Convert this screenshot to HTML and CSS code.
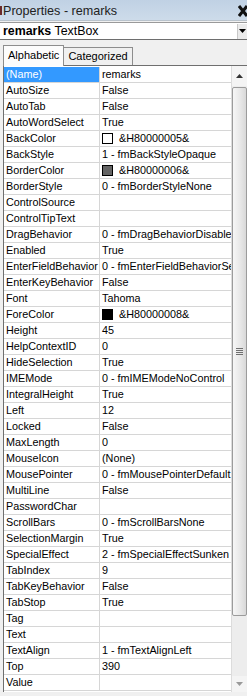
FILE: index.html
```html
<!DOCTYPE html>
<html lang="en">
  <head>
    <meta charset="UTF-8" />
    <title>Properties - remarks</title>
    <link rel="stylesheet" href="styles.css">
  </head>
  <body>
    <div class="window">
      <div class="titlebar">
        <span class="app-icon"></span>
        <span class="title">Properties - remarks</span>
        <svg class="close" width="10" height="12" viewBox="0 0 10 12">
          <path d="M1 1 L9 11 M9 1 L1 11" stroke="#111" stroke-width="3" fill="none" />
        </svg>
      </div>

      <!-- object selector -->
      <div class="selector">
        <span class="sel-text"><b>remarks</b> TextBox</span>
        <span class="sel-btn">
          <svg width="7" height="4" viewBox="0 0 7 4"><path d="M0 0 H7 L3.5 4 Z" fill="#000" /></svg>
        </span>
      </div>

      <div class="tabs">
        <div class="tab active">Alphabetic</div>
        <div class="tab">Categorized</div>
      </div>

      <div class="grid">
        <div id="rows" class="rows"></div>
        <div class="scrollbar">
          <div class="sb-btn">
            <svg width="7" height="4" viewBox="0 0 7 4"><path d="M0 4 H7 L3.5 0 Z" fill="#333" /></svg>
          </div>
          <div class="sb-thumb">
            <div class="grip"><i></i><i></i><i></i><i></i></div>
          </div>
          <div class="sb-track"></div>
          <div class="sb-btn down">
            <svg width="7" height="4" viewBox="0 0 7 4"><path d="M0 0 H7 L3.5 4 Z" fill="#999" /></svg>
          </div>
        </div>
      </div>
    </div>

    <script>
      const props = [
        ["(Name)", "remarks"],
        ["AutoSize", "False"],
        ["AutoTab", "False"],
        ["AutoWordSelect", "True"],
        ["BackColor", "&H80000005&", "#ffffff"],
        ["BackStyle", "1 - fmBackStyleOpaque"],
        ["BorderColor", "&H80000006&", "#646464"],
        ["BorderStyle", "0 - fmBorderStyleNone"],
        ["ControlSource", ""],
        ["ControlTipText", ""],
        ["DragBehavior", "0 - fmDragBehaviorDisabled"],
        ["Enabled", "True"],
        ["EnterFieldBehavior", "0 - fmEnterFieldBehaviorSelectAll"],
        ["EnterKeyBehavior", "False"],
        ["Font", "Tahoma"],
        ["ForeColor", "&H80000008&", "#000000"],
        ["Height", "45"],
        ["HelpContextID", "0"],
        ["HideSelection", "True"],
        ["IMEMode", "0 - fmIMEModeNoControl"],
        ["IntegralHeight", "True"],
        ["Left", "12"],
        ["Locked", "False"],
        ["MaxLength", "0"],
        ["MouseIcon", "(None)"],
        ["MousePointer", "0 - fmMousePointerDefault"],
        ["MultiLine", "False"],
        ["PasswordChar", ""],
        ["ScrollBars", "0 - fmScrollBarsNone"],
        ["SelectionMargin", "True"],
        ["SpecialEffect", "2 - fmSpecialEffectSunken"],
        ["TabIndex", "9"],
        ["TabKeyBehavior", "False"],
        ["TabStop", "True"],
        ["Tag", ""],
        ["Text", ""],
        ["TextAlign", "1 - fmTextAlignLeft"],
        ["Top", "390"],
        ["Value", ""],
      ];

      const rows = document.getElementById("rows");
      props.forEach(function (p, i) {
        const row = document.createElement("div");
        row.className = i === 0 ? "row selected" : "row";

        const name = document.createElement("div");
        name.className = "name";
        name.textContent = p[0];

        const value = document.createElement("div");
        value.className = "value";
        if (p[2]) {
          const sw = document.createElement("span");
          sw.className = "swatch";
          sw.style.background = p[2];
          value.appendChild(sw);
        }
        const txt = document.createElement("span");
        txt.textContent = p[1];
        value.appendChild(txt);

        row.appendChild(name);
        row.appendChild(value);
        rows.appendChild(row);
      });
    </script>
  </body>
</html>
```

FILE: styles.css
```css
body {
  margin: 0;
  padding: 0;
  background-color: #f0f0f0;
  font-family: "Liberation Sans", Arial, sans-serif;
  color: #000;
}

.window {
  width: 247px;
  height: 696px;
  overflow: hidden;
  background-color: #f0f0f0;
}

/* Title bar */
.titlebar {
  height: 20px;
  display: flex;
  align-items: center;
  background: linear-gradient(to bottom, #c0d1e4, #cddbea);
  border-bottom: 1px solid #b9c3cc;
}

.app-icon {
  width: 2px;
  height: 9px;
  background-color: #6b2a2a;
  margin-top: 1px;
}

.title {
  margin-left: 1px;
  font-size: 12.6px;
  color: #222;
  flex: 1;
  padding-top: 1px;
}

.close {
  margin-right: -1px;
  margin-top: 1px;
}

/* Object selector */
.selector {
  margin-top: 1px;
  height: 16px;
  display: flex;
  align-items: center;
  background-color: #fff;
  border-top: 1px solid #9a9a9a;
  border-bottom: 1px solid #6e6e6e;
}

.sel-text {
  flex: 1;
  padding-left: 3px;
  font-size: 12.4px;
}

.sel-btn {
  width: 9px;
  height: 15px;
  display: flex;
  align-items: center;
  justify-content: center;
  background-color: #eaeaea;
  border-left: 1px solid #c8c8c8;
}

/* Tabs */
.tabs {
  height: 25px;
  display: flex;
  align-items: flex-end;
  padding-left: 3px;
}

.tab {
  height: 17px;
  padding: 0 4px;
  font-size: 11px;
  line-height: 17px;
  border: 1px solid #8d8d8d;
  border-bottom: none;
  border-left: none;
  background-color: #f0f0f0;
}

.tab.active {
  height: 20px;
  line-height: 19px;
  padding: 0 4px 0 4px;
  background-color: #fcfcfc;
  border-left: 1px solid #8d8d8d;
  margin-bottom: -1px;
  position: relative;
}

/* Property grid */
.grid {
  margin-left: 3px;
  height: 626px;
  display: flex;
  background-color: #fff;
  border-top: 1px solid #6f6f6f;
  border-left: 1px solid #6f6f6f;
}

.rows {
  width: 227px;
  padding-top: 1px;
}

.row {
  height: 15px;
  display: flex;
  border-bottom: 1px solid #d6d6d6;
  font-size: 10.8px;
  line-height: 15px;
  white-space: nowrap;
  overflow: hidden;
}

.name {
  width: 93px;
  padding-left: 2px;
  border-right: 1px solid #d6d6d6;
  overflow: hidden;
}

.value {
  flex: 1;
  padding-left: 2px;
  display: flex;
  align-items: center;
  overflow: hidden;
}

.row.selected .name {
  background-color: #3399ff;
  color: #fff;
}

.swatch {
  width: 9px;
  height: 9px;
  border: 1px solid #000;
  margin-right: 6px;
  flex-shrink: 0;
}

/* Scrollbar */
.scrollbar {
  width: 16px;
  display: flex;
  flex-direction: column;
  background-color: #ededed;
  border-left: 1px solid #dcdcdc;
}

.sb-btn {
  height: 20px;
  display: flex;
  align-items: center;
  justify-content: center;
  background-color: #f4f4f4;
}

.sb-btn.down {
  height: 16px;
}

.sb-thumb {
  height: 527px;
  margin-top: 1px;
  border: 1px solid #9b9b9b;
  border-radius: 2px;
  background: linear-gradient(to right, #f6f6f6, #e6e6e6 60%, #d8d8d8);
  display: flex;
  align-items: center;
  justify-content: center;
}

.grip {
  display: flex;
  flex-direction: column;
  gap: 1px;
}

.grip i {
  display: block;
  width: 7px;
  height: 1px;
  background-color: #6f6f6f;
}

.sb-track {
  flex: 1;
}
```
